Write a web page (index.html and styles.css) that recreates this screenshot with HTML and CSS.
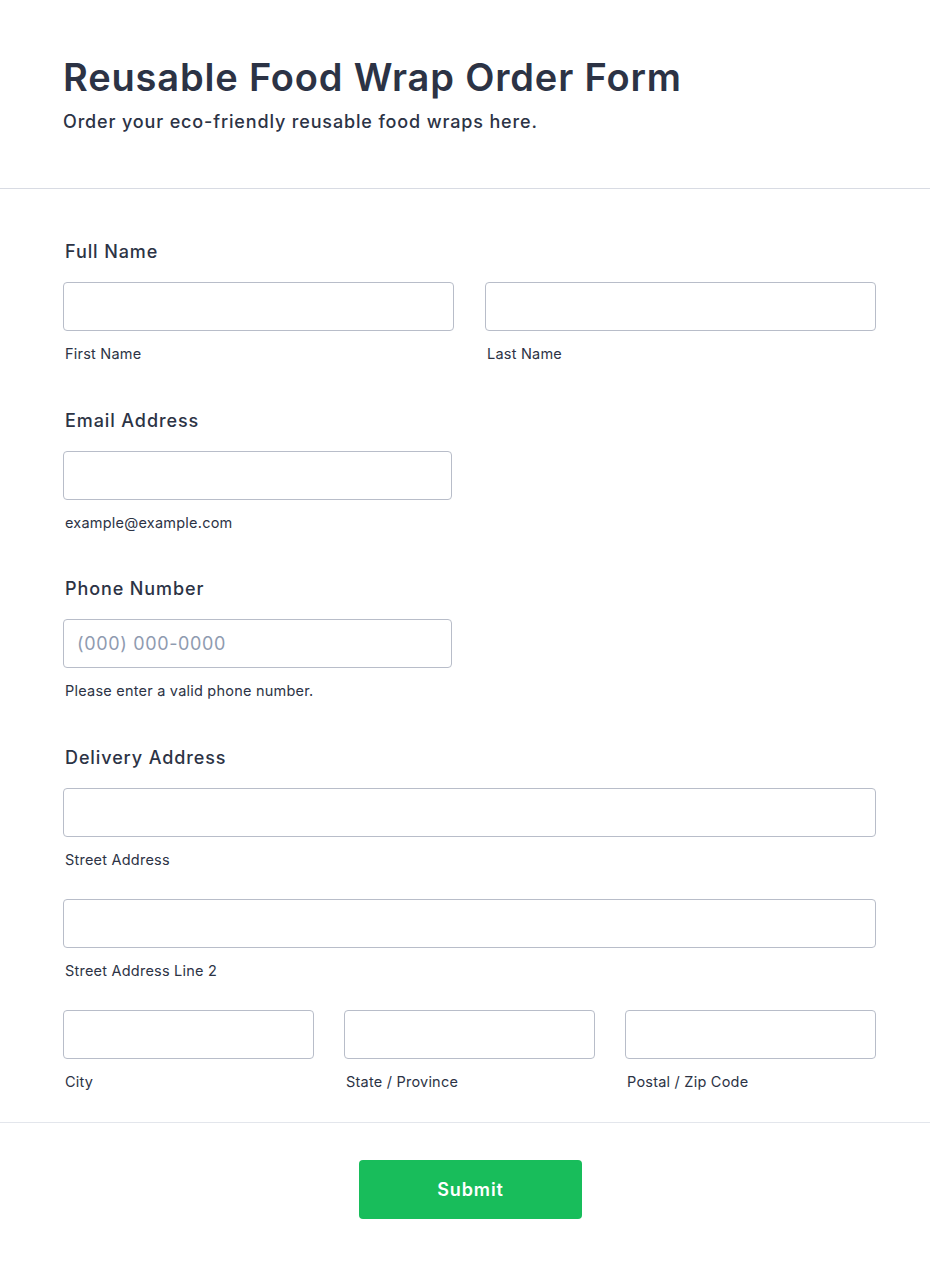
FILE: index.html
```html
<!DOCTYPE html>
<html lang="en">
<head>
    <meta charset="UTF-8">
    <meta name="viewport" content="width=device-width, initial-scale=1.0">
    <title>Reusable Food Wrap Order Form</title>
    <link rel="stylesheet" href="styles.css">
</head>
<body>
    <header class="form-header">
        <h1>Reusable Food Wrap Order Form</h1>
        <p>Order your eco-friendly reusable food wraps here.</p>
    </header>

    <form class="form-body" onsubmit="return false;">
        <!-- Full name -->
        <div class="question">
            <label class="q-label">Full Name</label>
            <div class="row two">
                <div class="field">
                    <input type="text">
                    <span class="sub">First Name</span>
                </div>
                <div class="field">
                    <input type="text">
                    <span class="sub">Last Name</span>
                </div>
            </div>
        </div>

        <div class="question">
            <label class="q-label">Email Address</label>
            <div class="field half">
                <input type="email">
                <span class="sub">example@example.com</span>
            </div>
        </div>

        <div class="question">
            <label class="q-label">Phone Number</label>
            <div class="field half">
                <input type="tel" placeholder="(000) 000-0000">
                <span class="sub">Please enter a valid phone number.</span>
            </div>
        </div>

        <!-- Address block -->
        <div class="question last">
            <label class="q-label">Delivery Address</label>
            <div class="field wide">
                <input type="text">
                <span class="sub">Street Address</span>
            </div>
            <div class="field wide">
                <input type="text">
                <span class="sub">Street Address Line 2</span>
            </div>
            <div class="row three">
                <div class="field">
                    <input type="text">
                    <span class="sub">City</span>
                </div>
                <div class="field">
                    <input type="text">
                    <span class="sub">State / Province</span>
                </div>
                <div class="field">
                    <input type="text">
                    <span class="sub">Postal / Zip Code</span>
                </div>
            </div>
        </div>

        <div class="form-footer">
            <button type="submit" class="submit-btn">Submit</button>
        </div>
    </form>
</body>
</html>
```

FILE: styles.css
```css
body {
    margin: 0;
    background-color: #fff;
    font-family: Inter, "Noto Sans", Arial, sans-serif;
    color: #2c3345;
}

.form-header {
    padding: 52px 54px 54px 63px;
    border-bottom: 1px solid #d8dbe3;
}

.form-header h1 {
    margin: 0;
    font-size: 38px;
    line-height: 50px;
    font-weight: 600;
    letter-spacing: 0.83px;
}

.form-header p {
    margin: 8px 0 0;
    font-size: 18px;
    line-height: 24px;
    font-weight: 500;
    letter-spacing: 0.85px;
}

.form-body {
    padding: 52px 54px 0 63px;
}

.question {
    margin-bottom: 46.5px;
}

.question.last {
    margin-bottom: 31px;
}

.q-label {
    display: block;
    margin: 0 0 19px 2px;
    font-size: 18px;
    line-height: 22px;
    font-weight: 500;
    letter-spacing: 0.9px;
}

.row {
    display: grid;
    column-gap: 31px;
}

.row.two {
    grid-template-columns: 1fr 1fr;
}

.row.three {
    grid-template-columns: 1fr 1fr 1fr;
    column-gap: 30px;
}

.field {
    display: flex;
    flex-direction: column;
}

.field.half {
    width: 389px;
}

.field.wide {
    margin-bottom: 30px;
}

.field input {
    box-sizing: border-box;
    height: 49px;
    width: 100%;
    margin: 0;
    padding: 0 13px;
    border: 1px solid #b8bdc9;
    border-radius: 4px;
    background-color: #fff;
    font-family: inherit;
    font-size: 18px;
    letter-spacing: 0.65px;
    color: #2c3345;
}

.field input::placeholder {
    color: #8f9bb0;
}

.sub {
    display: block;
    margin: 14px 0 0 2px;
    font-size: 14.5px;
    line-height: 18px;
    letter-spacing: 0.22px;
    color: #2c3345;
}

/* divider runs full width, button stays centred on the fields */
.form-footer {
    margin: 0 -54px 0 -63px;
    padding: 37px 53px 50px 64px;
    border-top: 1px solid #e3e6ec;
    display: flex;
    justify-content: center;
}

.submit-btn {
    width: 223px;
    height: 59px;
    border: none;
    border-radius: 4px;
    background-color: #18bd5b;
    color: #fff;
    font-family: inherit;
    font-size: 18px;
    font-weight: 600;
    letter-spacing: 0.9px;
    cursor: pointer;
}
```
